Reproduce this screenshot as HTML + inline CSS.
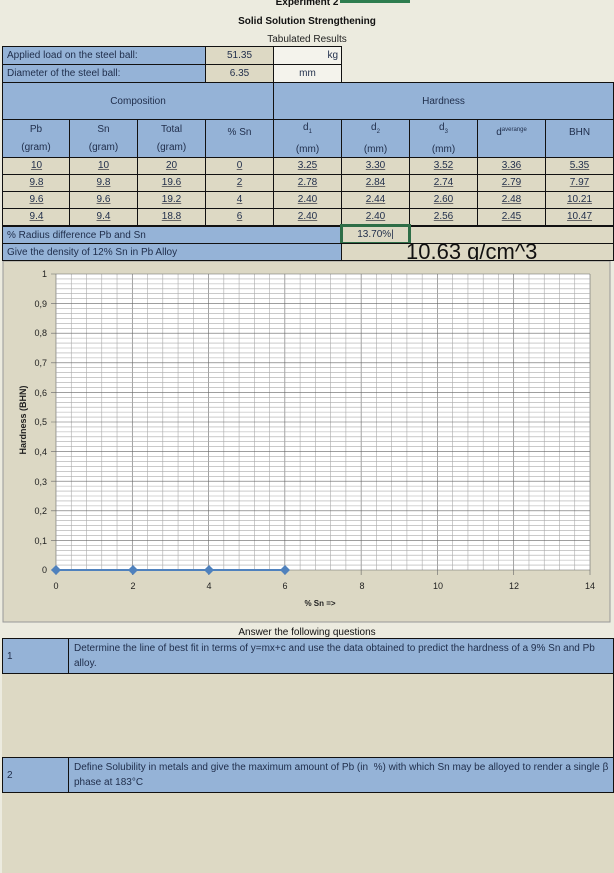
<!DOCTYPE html>
<html><head><meta charset="utf-8"><style>
*{margin:0;padding:0;box-sizing:border-box}
body{width:614px;height:873px;background:#ecebdf;position:relative;overflow:hidden;font-family:"Liberation Sans",sans-serif;font-size:10px;color:#1f2d4a}
.c{position:absolute;display:flex;align-items:center;justify-content:center;overflow:hidden;white-space:nowrap}
.b{background:#95b3d7}
.t{background:#ddd9c4}
.w{background:#f4f3ec}
.l{justify-content:flex-start;padding-left:4px}
.bd{border:1.5px solid #111}
.d{position:absolute;height:18px;width:69px;border:1.5px solid #111;background:#ddd9c4;text-align:center;line-height:16px;text-decoration:underline;text-decoration-color:#666;font-size:10px}
</style></head><body>
<div style="position:absolute;left:340px;top:0;width:70px;height:3px;background:#2e7d4f"></div>
<div class="c" style="left:0;top:-4px;width:614px;height:12px;font-weight:bold;font-size:10px;color:#111">Experiment 2</div>
<div class="c" style="left:0;top:14px;width:614px;height:14px;font-weight:bold;font-size:10px;color:#111">Solid Solution Strengthening</div>
<div class="c" style="left:0;top:32px;width:614px;height:14px;font-size:10px;color:#222">Tabulated Results</div>

<div class="c b l bd" style="left:2px;top:46px;width:204px;height:19px">Applied load on the steel ball:</div>
<div class="c t bd" style="left:205px;top:46px;width:69px;height:19px">51.35</div>
<div class="c w bd" style="left:273px;top:46px;width:69px;height:19px;justify-content:flex-end;padding-right:3px">kg</div>
<div class="c b l bd" style="left:2px;top:64px;width:204px;height:19px">Diameter of the steel ball:</div>
<div class="c t bd" style="left:205px;top:64px;width:69px;height:19px">6.35</div>
<div class="c w bd" style="left:273px;top:64px;width:69px;height:19px">mm</div>

<div class="c b bd" style="left:2px;top:82px;width:272px;height:38px">Composition</div>
<div class="c b bd" style="left:273px;top:82px;width:341px;height:38px">Hardness</div>

<div class="c b bd" style="left:2px;top:119px;width:68px;height:39px;flex-direction:column;line-height:18px">Pb<br><span>(gram)</span></div>
<div class="c b bd" style="left:69px;top:119px;width:69px;height:39px;flex-direction:column;line-height:18px">Sn<br><span>(gram)</span></div>
<div class="c b bd" style="left:137px;top:119px;width:69px;height:39px;flex-direction:column;line-height:18px">Total<br><span>(gram)</span></div>
<div class="c b bd" style="left:205px;top:119px;width:69px;height:39px;align-items:flex-start;padding-top:7px">% Sn</div>
<div class="c b bd" style="left:273px;top:119px;width:69px;height:39px;flex-direction:column;line-height:18px"><span>d<sub style="font-size:6px">1</sub></span><span>(mm)</span></div>
<div class="c b bd" style="left:341px;top:119px;width:69px;height:39px;flex-direction:column;line-height:18px"><span>d<sub style="font-size:6px">2</sub></span><span>(mm)</span></div>
<div class="c b bd" style="left:409px;top:119px;width:69px;height:39px;flex-direction:column;line-height:18px"><span>d<sub style="font-size:6px">3</sub></span><span>(mm)</span></div>
<div class="c b bd" style="left:477px;top:119px;width:69px;height:39px;align-items:flex-start;padding-top:7px">d<sub style="font-size:6px">averange</sub></div>
<div class="c b bd" style="left:545px;top:119px;width:69px;height:39px;align-items:flex-start;padding-top:7px">BHN</div>

<div id="rows"></div>
<script>
var data=[["10","10","20","0","3.25","3.30","3.52","3.36","5.35"],["9.8","9.8","19.6","2","2.78","2.84","2.74","2.79","7.97"],["9.6","9.6","19.2","4","2.40","2.44","2.60","2.48","10.21"],["9.4","9.4","18.8","6","2.40","2.40","2.56","2.45","10.47"]];
var L=[2,69,137,205,273,341,409,477,545],h='';
for(var r=0;r<4;r++)for(var c=0;c<9;c++)h+='<div class="d" style="left:'+L[c]+'px;top:'+(157+r*17)+'px">'+data[r][c]+'</div>';
document.getElementById('rows').innerHTML=h;
</script>

<div class="c b l bd" style="left:2px;top:226px;width:340px;height:18px">% Radius difference Pb and Sn</div>
<div class="c t bd" style="left:341px;top:226px;width:273px;height:18px"></div>
<div class="c t" style="left:340px;top:224px;width:71px;height:21px;border:3px solid #2e6e47">13.70%|</div>
<div class="c b l bd" style="left:2px;top:243px;width:340px;height:18px">Give the density of 12% Sn in Pb Alloy</div>
<div class="c t bd" style="left:341px;top:243px;width:273px;height:18px;align-items:flex-start;justify-content:flex-start"><span style="font-size:22px;color:#111;margin-left:64px;margin-top:-3px;line-height:22px">10.63 g/cm^3</span></div>

<svg style="position:absolute;left:0;top:261px" width="614" height="362" viewBox="0 261 614 362">
<rect x="3" y="261" width="607" height="361" fill="#dcd8c4" stroke="#999" stroke-width="1"/>
<rect x="56" y="274" width="534" height="296" fill="#fff"/>
<g stroke="#999" stroke-width="0.6" id="g"></g>
<g font-family="Liberation Sans" font-size="9" fill="#222" text-anchor="end">
<text x="47" y="277">1</text><text x="47" y="307">0,9</text><text x="47" y="336">0,8</text><text x="47" y="366">0,7</text><text x="47" y="396">0,6</text><text x="47" y="425">0,5</text><text x="47" y="455">0,4</text><text x="47" y="485">0,3</text><text x="47" y="514">0,2</text><text x="47" y="544">0,1</text><text x="47" y="573">0</text>
</g>
<g font-family="Liberation Sans" font-size="9" fill="#222" text-anchor="middle">
<text x="56" y="589">0</text><text x="133" y="589">2</text><text x="209" y="589">4</text><text x="285" y="589">6</text><text x="362" y="589">8</text><text x="438" y="589">10</text><text x="514" y="589">12</text><text x="590" y="589">14</text>
<text x="320" y="606" font-weight="bold" font-size="8">% Sn =&gt;</text>
<text transform="translate(26,420) rotate(-90)" font-weight="bold" font-size="9">Hardness (BHN)</text>
</g>
<line x1="56" y1="570" x2="285" y2="570" stroke="#4f81bd" stroke-width="2"/>
<g fill="#4f81bd">
<path d="M56 565l5 5-5 5-5-5z"/><path d="M133 565l5 5-5 5-5-5z"/><path d="M209 565l5 5-5 5-5-5z"/><path d="M285 565l5 5-5 5-5-5z"/>
</g>
</svg>
<script>
var g=document.getElementById('g'),s='';
for(var i=0;i<=35;i++){var x=56+i*534/35;var maj=i%5==0;s+='<line x1="'+x+'" y1="274" x2="'+x+'" y2="'+(maj?575:570)+'" stroke="'+(maj?'#666':'#aaa')+'"/>';}
for(var j=0;j<=60;j++){var y=274+j*296/60;var maj=j%6==0;s+='<line x1="'+(maj?51:56)+'" y1="'+y+'" x2="590" y2="'+y+'" stroke="'+(maj?'#666':'#aaa')+'"/>';}
g.innerHTML=s;
</script>

<div class="c" style="left:0;top:625px;width:614px;height:14px;font-size:10px;color:#111;background:#ecebdf">Answer the following questions</div>
<div class="c b l bd" style="left:2px;top:638px;width:67px;height:36px">1</div>
<div class="c b bd" style="left:68px;top:638px;width:546px;height:36px;white-space:normal;justify-content:flex-start;padding-left:5px;line-height:15px">Determine the line of best fit in terms of y=mx+c and use the data obtained to predict the hardness of a 9% Sn and Pb alloy.</div>
<div class="c t" style="left:2px;top:674px;width:612px;height:84px;border-right:1.5px solid #111"></div>
<div class="c b l bd" style="left:2px;top:757px;width:67px;height:36px">2</div>
<div class="c b bd" style="left:68px;top:757px;width:546px;height:36px;white-space:normal;justify-content:flex-start;padding-left:5px;line-height:15px">Define Solubility in metals and give the maximum amount of Pb (in &nbsp;%) with which Sn may be alloyed to render a single β phase at 183°C</div>
<div class="c t" style="left:2px;top:793px;width:612px;height:80px"></div>
</body></html>
